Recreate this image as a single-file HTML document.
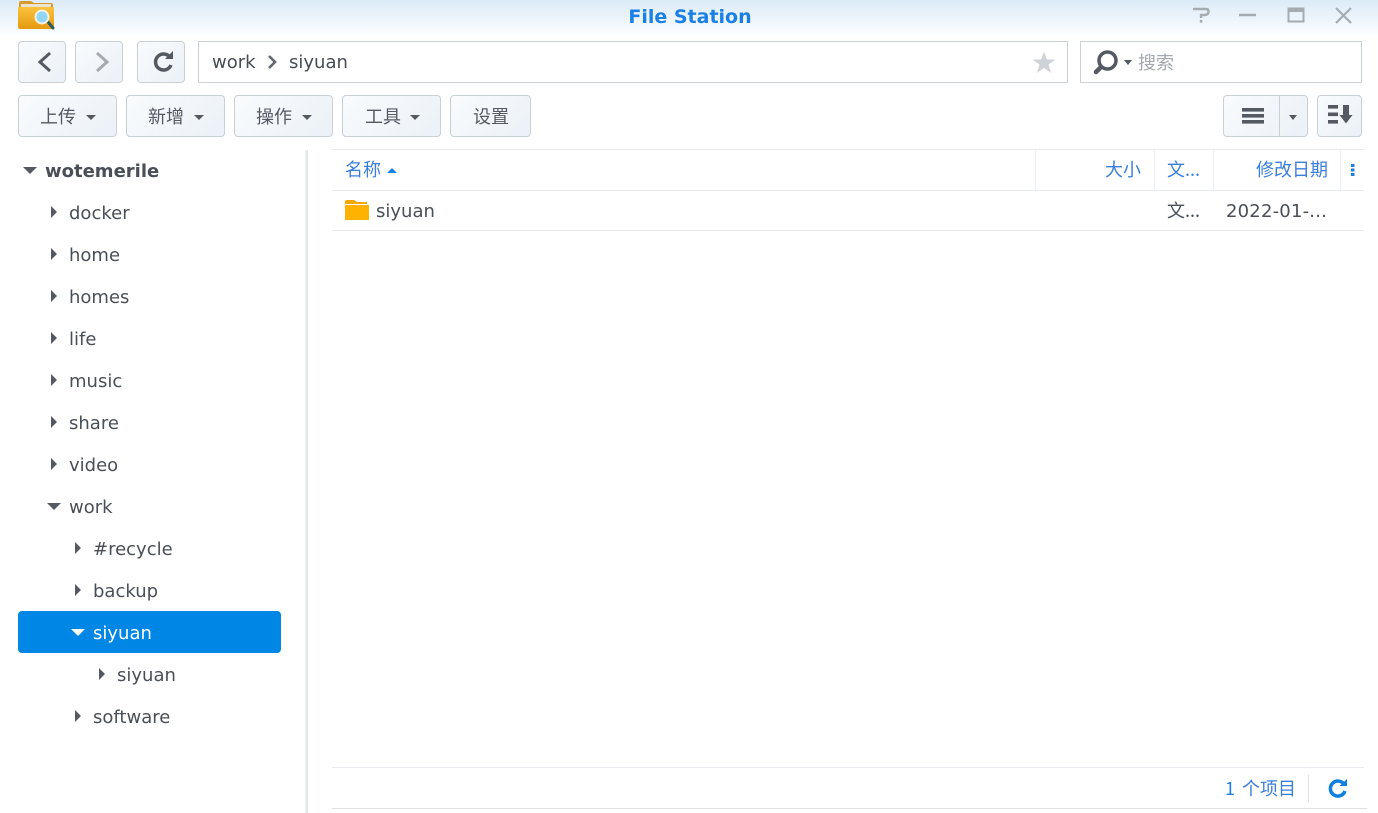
<!DOCTYPE html>
<html><head><meta charset="utf-8"><title>File Station</title>
<style>
html,body{margin:0;padding:0;background:#fff;}
body{width:1378px;height:813px;overflow:hidden;position:relative;font-family:"DejaVu Sans","Noto Sans CJK SC",sans-serif;font-size:18px;color:#4a4f57;}
.a,.t,.b{position:absolute;}
.t{line-height:24px;white-space:nowrap;}
.b{box-sizing:border-box;border:1px solid #c9d0d6;border-radius:4px;background:linear-gradient(135deg,#f9fbfd,#ebf1f7);height:42px;}
.cjk{font-family:"Noto Sans CJK SC","DejaVu Sans",sans-serif;}
.b .t{font-family:"Noto Sans CJK SC",sans-serif;color:#555a62;}
.dn{position:absolute;width:0;height:0;border-left:5px solid transparent;border-right:5px solid transparent;border-top:5px solid #555a62;}
.rt{position:absolute;width:0;height:0;border-top:6px solid transparent;border-bottom:6px solid transparent;border-left:6.500px solid #555a62;}
.dt{position:absolute;width:0;height:0;border-left:7px solid transparent;border-right:7px solid transparent;border-top:7px solid #555a62;}
.blue{color:#3a7fdb;font-family:"Noto Sans CJK SC",sans-serif;}
.line{position:absolute;background:#e9edf0;height:1px;}
.v{position:absolute;background:#eef1f4;width:1px;}
</style></head><body>
<div class="a" style="left:0;top:0;width:1378px;height:36px;background:linear-gradient(180deg,#dcebf8 0,#eaf3fb 45%,#fdfeff 100%);"></div>

<svg class="a" style="left:18px;top:0" width="37" height="31" viewBox="0 0 37 31">
<defs><linearGradient id="g" x1="0" y1="0" x2="0" y2="1"><stop offset="0" stop-color="#fbc23c"/><stop offset="1" stop-color="#e59a12"/></linearGradient></defs>
<path d="M1 3 Q1 1 3 1 H13 L16 3 H33 Q35 3 35 5 V10 H1Z" fill="#d99a2b"/>
<rect x="3" y="4" width="30" height="4" fill="#e9e4d2"/>
<path d="M0 7 H36 V27 Q36 29 34 29 H2 Q0 29 0 27Z" fill="url(#g)"/>
<line x1="30" y1="22" x2="35" y2="28" stroke="#2b5a60" stroke-width="3" stroke-linecap="round"/>
<circle cx="24" cy="17" r="6.5" fill="#8fd6f7" stroke="#f6f2e4" stroke-width="2"/>
</svg>
<div class="t" style="left:590px;width:200px;top:5px;text-align:center;font-weight:bold;font-size:19px;color:#1a80e6;">File Station</div>

<svg class="a" style="left:1185px;top:0" width="180" height="30" viewBox="0 0 180 30" fill="none" stroke="#a4acb2" stroke-width="2.4">
<path d="M8 9 H21 Q23.500 9 23.500 11.500 Q23.500 15 19 15 H16 V18"/><rect x="14.800" y="20" width="2.600" height="2.600" fill="#a4acb2" stroke="none"/>
<path d="M54 15 H71" stroke-width="2.600"/>
<rect x="103.500" y="8.500" width="15" height="13" stroke-width="2"/><rect x="103" y="8" width="16" height="4" fill="#a4acb2" stroke="none"/>
<path d="M151 8 L166 23 M166 8 L151 23" stroke-width="2.200"/>
</svg>

<div class="b" style="left:18px;top:41px;width:48px;"></div>
<svg class="a" style="left:18px;top:41px" width="48" height="42" fill="none"><path d="M32 12 L22 21 L32 30" stroke="#555a62" stroke-width="3"/></svg>
<div class="b" style="left:75px;top:41px;width:48px;"></div>
<svg class="a" style="left:75px;top:41px" width="48" height="42" fill="none"><path d="M22 12 L32 21 L22 30" stroke="#a6abb0" stroke-width="3"/></svg>
<div class="b" style="left:137px;top:41px;width:48px;"></div>
<svg class="a" style="left:138px;top:41px" width="48" height="42" fill="none"><path d="M32.500 17 A8 8 0 1 0 33 24" stroke="#555a62" stroke-width="3.500"/><path d="M27 18 H35 V10Z" fill="#555a62"/></svg>

<div class="a" style="left:198px;top:41px;width:870px;height:42px;box-sizing:border-box;border:1px solid #ccd2d7;background:#fff;"></div>
<div class="t" style="left:212px;top:51px;color:#474c54;">work</div>
<svg class="a" style="left:267px;top:55px" width="12" height="14" fill="none"><path d="M2 1 L8 7 L2 13" stroke="#626770" stroke-width="2.600"/></svg>
<div class="t" style="left:289px;top:51px;color:#474c54;">siyuan</div>
<svg class="a" style="left:1032px;top:51px" width="24" height="23" viewBox="0 0 24 23"><path d="M12 .5 L15 8.500 H23.500 L16.500 13.500 L19.200 22 L12 17 L4.800 22 L7.500 13.500 L.5 8.500 H9Z" fill="#cfd3d8"/></svg>

<div class="a" style="left:1080px;top:41px;width:282px;height:42px;box-sizing:border-box;border:1px solid #ccd2d7;background:#fff;"></div>
<svg class="a" style="left:1092px;top:49px" width="28" height="26" fill="none"><circle cx="15.500" cy="11.500" r="8.500" stroke="#555a62" stroke-width="3.500"/><path d="M8.500 18.500 L4 23" stroke="#555a62" stroke-width="4.500" stroke-linecap="round"/></svg>
<div class="dn" style="left:1124px;top:60px;border-left-width:4.500px;border-right-width:4.500px;"></div>
<div class="t cjk" style="left:1138px;top:50px;color:#a3a8ae;">搜索</div>

<div class="b" style="left:18px;top:95px;width:99px;"><div class="t" style="left:21px;top:8px;">上传</div><div class="dn" style="left:67px;top:19px;"></div></div>
<div class="b" style="left:126px;top:95px;width:99px;"><div class="t" style="left:21px;top:8px;">新增</div><div class="dn" style="left:67px;top:19px;"></div></div>
<div class="b" style="left:234px;top:95px;width:99px;"><div class="t" style="left:21px;top:8px;">操作</div><div class="dn" style="left:67px;top:19px;"></div></div>
<div class="b" style="left:342px;top:95px;width:99px;"><div class="t" style="left:22px;top:8px;">工具</div><div class="dn" style="left:67px;top:19px;"></div></div>
<div class="b" style="left:450px;top:95px;width:81px;"><div class="t" style="left:22px;top:8px;">设置</div></div>

<div class="b" style="left:1223px;top:95px;width:85px;"></div>
<div class="a" style="left:1279px;top:96px;width:1px;height:40px;background:#c9d0d6;"></div>
<svg class="a" style="left:1242px;top:107px" width="22" height="18"><rect y="1" width="22" height="3.600" fill="#555a62"/><rect y="7" width="22" height="3.600" fill="#555a62"/><rect y="13" width="22" height="3.600" fill="#555a62"/></svg>
<div class="dn" style="left:1289px;top:115px;border-left-width:4.500px;border-right-width:4.500px;"></div>
<div class="b" style="left:1317px;top:95px;width:45px;"></div>
<svg class="a" style="left:1327px;top:104px" width="26" height="22" fill="#555a62"><rect x="1" y="1" width="10" height="3.600"/><rect x="1" y="8.500" width="10" height="3.600"/><rect x="1" y="16" width="10" height="3.600"/><rect x="16" y="1" width="6" height="11"/><path d="M12.500 11 H25.500 L19 19.500Z"/></svg>

<div class="a" style="left:305px;top:150px;width:3px;height:663px;background:linear-gradient(90deg,#f4f5f6,#dcdfe1);"></div>

<div class="dt" style="left:23px;top:167px;"></div>
<div class="t" style="left:45px;top:160px;font-weight:bold;color:#4a4f57;font-size:18px;">wotemerile</div>
<div class="rt" style="left:51px;top:206px;"></div><div class="t" style="left:69px;top:202px;">docker</div>
<div class="rt" style="left:51px;top:248px;"></div><div class="t" style="left:69px;top:244px;">home</div>
<div class="rt" style="left:51px;top:290px;"></div><div class="t" style="left:69px;top:286px;">homes</div>
<div class="rt" style="left:51px;top:332px;"></div><div class="t" style="left:69px;top:328px;">life</div>
<div class="rt" style="left:51px;top:374px;"></div><div class="t" style="left:69px;top:370px;">music</div>
<div class="rt" style="left:51px;top:416px;"></div><div class="t" style="left:69px;top:412px;">share</div>
<div class="rt" style="left:51px;top:458px;"></div><div class="t" style="left:69px;top:454px;">video</div>
<div class="dt" style="left:47px;top:503px;"></div><div class="t" style="left:69px;top:496px;">work</div>
<div class="rt" style="left:75px;top:542px;"></div><div class="t" style="left:93px;top:538px;">#recycle</div>
<div class="rt" style="left:75px;top:584px;"></div><div class="t" style="left:93px;top:580px;">backup</div>
<div class="a" style="left:18px;top:611px;width:263px;height:42px;background:#0086e5;border-radius:4px;"></div>
<div class="dt" style="left:71px;top:629px;border-top-color:#fff;"></div><div class="t" style="left:93px;top:622px;color:#fff;">siyuan</div>
<div class="rt" style="left:99px;top:668px;"></div><div class="t" style="left:117px;top:664px;">siyuan</div>
<div class="rt" style="left:75px;top:710px;"></div><div class="t" style="left:93px;top:706px;">software</div>

<div class="line" style="left:332px;top:149px;width:1032px;"></div>
<div class="line" style="left:332px;top:190px;width:1032px;"></div>
<div class="line" style="left:332px;top:230px;width:1032px;"></div>
<div class="v" style="left:1035px;top:150px;height:40px;"></div>
<div class="v" style="left:1154px;top:150px;height:40px;"></div>
<div class="v" style="left:1213px;top:150px;height:40px;"></div>
<div class="v" style="left:1340px;top:150px;height:40px;"></div>

<div class="t blue" style="left:345px;top:157px;">名称</div>
<div class="dn" style="left:387px;top:168px;border-top:0;border-bottom:5px solid #1a80e6;"></div>
<div class="t blue" style="left:1105px;top:157px;">大小</div>
<div class="t blue" style="left:1167px;top:157px;">文...</div>
<div class="t blue" style="left:1256px;top:157px;">修改日期</div>
<svg class="a" style="left:1350px;top:163px" width="6" height="14" fill="#1a80e6"><rect x="1" y="1" width="3.500" height="3"/><rect x="1" y="5.500" width="3.500" height="3"/><rect x="1" y="10" width="3.500" height="3"/></svg>

<svg class="a" style="left:345px;top:199px" width="25" height="22"><path d="M0 3 Q0 1 2 1 H9 L12 3 H22 V5 H0Z" fill="#f5a800"/><path d="M0 6 H24 V21 H0Z" fill="#ffb300"/></svg>
<div class="t" style="left:376px;top:200px;">siyuan</div>
<div class="t cjk" style="left:1167px;top:198px;">文...</div>
<div class="t" style="left:1226px;top:200px;letter-spacing:.2px;">2022-01-...</div>

<div class="line" style="left:332px;top:767px;width:1032px;"></div>
<div class="a" style="left:332px;top:808px;width:1035px;height:1px;background:#dfe2e5;"></div>
<div class="a" style="left:1308px;top:775px;width:1px;height:27px;background:#e0e4e7;"></div>
<div class="t blue" style="left:1225px;top:776px;"><span style="color:#1a80e6;margin-right:3px;">1</span> 个项目</div>
<svg class="a" style="left:1326px;top:777px" width="24" height="22" fill="none"><path d="M18.500 8 A7.500 7.500 0 1 0 19 14" stroke="#0f7fe0" stroke-width="3.500"/><path d="M13.500 9 H21 V2Z" fill="#0f7fe0"/></svg>
</body></html>
